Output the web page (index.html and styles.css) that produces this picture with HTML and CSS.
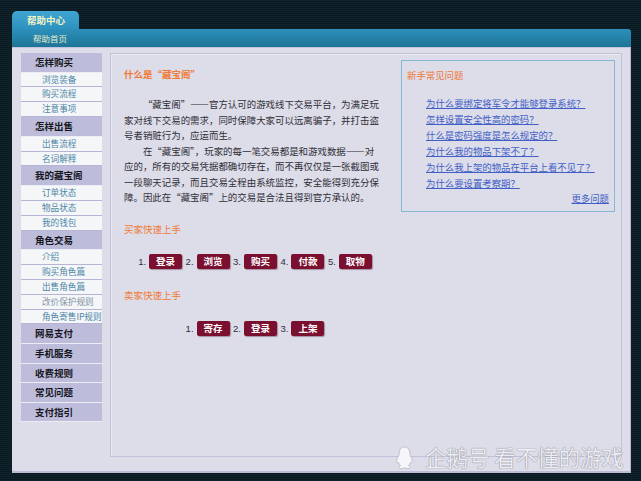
FILE: index.html
```html
<!DOCTYPE html>
<html lang="zh-CN">
<head>
<meta charset="utf-8">
<title>帮助中心</title>
<link rel="stylesheet" href="styles.css">
</head>
<body>
<div class="page">
  <div class="tab">帮助中心</div>
  <div class="bar">帮助首页</div>
  <div class="panel">
    <nav class="side">
      <div class="grp">怎样购买</div>
      <a class="item">浏览装备</a>
      <a class="item">购买流程</a>
      <a class="item">注意事项</a>
      <div class="grp">怎样出售</div>
      <a class="item">出售流程</a>
      <a class="item">名词解释</a>
      <div class="grp">我的藏宝阁</div>
      <a class="item">订单状态</a>
      <a class="item">物品状态</a>
      <a class="item">我的钱包</a>
      <div class="grp">角色交易</div>
      <a class="item">介绍</a>
      <a class="item">购买角色篇</a>
      <a class="item">出售角色篇</a>
      <a class="item dim">改价保护规则</a>
      <a class="item">角色寄售IP规则</a>
      <div class="grp">网易支付</div>
      <div class="grp">手机服务</div>
      <div class="grp">收费规则</div>
      <div class="grp">常见问题</div>
      <div class="grp">支付指引</div>
    </nav>
    <main class="content">
      <section class="intro">
        <h2 class="title bold">什么是“藏宝阁”</h2>
        <p class="para">“藏宝阁”——官方认可的游戏线下交易平台，为满足玩<br>家对线下交易的需求，同时保障大家可以远离骗子，并打击盗<br>号者销赃行为，应运而生。</p>
        <p class="para">在“藏宝阁”，玩家的每一笔交易都是和游戏数据——对<br>应的，所有的交易凭据都确切存在，而不再仅仅是一张截图或<br>一段聊天记录，而且交易全程由系统监控，安全能得到充分保<br>障。因此在“藏宝阁”上的交易是合法且得到官方承认的。</p>
        <h3 class="title sub">买家快速上手</h3>
        <div class="steps">
          <span class="step"><span class="num">1.</span><span class="btn">登录</span></span>
          <span class="step"><span class="num">2.</span><span class="btn">浏览</span></span>
          <span class="step"><span class="num">3.</span><span class="btn">购买</span></span>
          <span class="step"><span class="num">4.</span><span class="btn">付款</span></span>
          <span class="step"><span class="num">5.</span><span class="btn">取物</span></span>
        </div>
        <h3 class="title sub sub2">卖家快速上手</h3>
        <div class="steps steps2">
          <span class="step"><span class="num">1.</span><span class="btn">寄存</span></span>
          <span class="step"><span class="num">2.</span><span class="btn">登录</span></span>
          <span class="step"><span class="num">3.</span><span class="btn">上架</span></span>
        </div>
      </section>
      <aside class="faq">
        <h3 class="faq-title">新手常见问题</h3>
        <ul class="faq-list">
          <li><a>为什么要绑定将军令才能够登录系统？</a></li>
          <li><a>怎样设置安全性高的密码？</a></li>
          <li><a>什么是密码强度是怎么规定的？</a></li>
          <li><a>为什么我的物品下架不了？</a></li>
          <li><a>为什么我上架的物品在平台上看不见了？</a></li>
          <li><a>为什么要设置考察期？</a></li>
        </ul>
        <div class="more"><a>更多问题</a></div>
      </aside>
    </main>
  </div>
  <div class="watermark">
    <svg class="penguin" width="17" height="23" viewBox="0 0 17 23"><path d="M8.5 1C4.8 1 3.2 4 3.2 7.5c0 1.5-.6 2.6-1.5 4C.8 13 .4 15 1 16.5c.4.9 1.2.5 1.6-.2.3 1.4 1 2.6 2 3.4-1 .4-2 1-2 1.8 0 .9 2 1.2 3.2 1 1-.2 1.8-.6 2.7-.6s1.7.4 2.7.6c1.2.2 3.2-.1 3.2-1 0-.8-1-1.4-2-1.8 1-.8 1.7-2 2-3.4.4.7 1.2 1.1 1.6.2.6-1.5.2-3.5-.7-5-.9-1.4-1.5-2.5-1.5-4C13.8 4 12.2 1 8.5 1z" fill="#f6f6fa" stroke="#a6a6b0" stroke-width=".6"/></svg>
    <span class="wm-text">企鹅号 看不懂的游戏</span>
  </div>
</div>
</body>
</html>
```
FILE: styles.css
```css
* { box-sizing: border-box; }
html, body { margin: 0; padding: 0; }
body {
  width: 641px;
  height: 481px;
  overflow: hidden;
  background: repeating-linear-gradient(to bottom, #10222b 0, #10222b 1px, #0b1a21 1px, #0b1a21 2px);
  font-family: "Noto Sans CJK SC", "Noto Sans", sans-serif;
}
.page {
  position: relative;
  width: 641px;
  height: 481px;
  padding: 11px 10px 0 12px;
}
.tab {
  width: 67px;
  height: 18px;
  border-radius: 5px 5px 0 0;
  background: linear-gradient(#40a5d0, #2d92be);
  color: #f4f4c6;
  font-weight: bold;
  font-size: 9.5px;
  line-height: 18px;
  padding-left: 15px;
}
.bar {
  height: 18px;
  border-radius: 0 3px 0 0;
  background: linear-gradient(#2c90bc, #1e7496);
  color: #e6edcc;
  font-size: 8.5px;
  line-height: 18px;
  padding-left: 21px;
}
.panel {
  height: 426px;
  background: #dddce9;
  border-top: 1px solid #c3c6de;
  box-shadow: inset -1px 0 #b7b6d2, inset 0 -2px #bcbbd5;
  display: flex;
  align-items: flex-start;
  gap: 8px;
  padding: 5px 9px 0 9px;
}
.side {
  width: 81px;
  flex: none;
  display: flex;
  flex-direction: column;
}
.grp {
  height: 19.6px;
  line-height: 18.6px;
  background: #bdbddb;
  border-bottom: 1px solid #ececf5;
  color: #151520;
  font-weight: bold;
  font-size: 9.5px;
  padding-left: 14px;
}
.item {
  height: 14.85px;
  line-height: 13.85px;
  background: #f5f6f8;
  border-bottom: 1px solid #b6b5d5;
  color: #4c86a6;
  font-size: 8.6px;
  padding-left: 21px;
}
.item.dim { color: #7f93a4; }
.content {
  flex: 1;
  height: 404px;
  border: 1px solid #c2c1da;
  box-shadow: inset 1px 1px 0 #e9e9f2;
  background: #dddce9;
  display: flex;
  align-items: flex-start;
  padding: 1px 6px 0 13px;
}
.intro {
  width: 262px;
  flex: none;
  padding-top: 11px;
  font-size: 9.45px;
}
.title {
  margin: 0;
  font-size: 9.5px;
  line-height: 16px;
  color: #f07a36;
  font-weight: normal;
}
.title.bold { font-weight: bold; }
.para {
  margin: 0;
  text-indent: 2em;
  color: #2f2f36;
  line-height: 15.5px;
  white-space: nowrap;
}
.title.bold + .para { margin-top: 15px; }
.title.sub { margin-top: 15.25px; }
.title.sub2 { margin-top: 18px; }
.steps {
  display: flex;
  justify-content: center;
  align-items: center;
  gap: 3.5px;
  height: 15px;
  margin-top: 17px;
}
.steps2 { margin-top: 18px; }
.step {
  display: inline-flex;
  align-items: center;
  gap: 3px;
}
.num {
  font-family: "Liberation Sans", Arial, sans-serif;
  font-size: 9.5px;
  color: #2f2f36;
}
.btn {
  display: inline-block;
  width: 33px;
  height: 15px;
  line-height: 15px;
  border-radius: 2px;
  background: #7a0f2f;
  box-shadow: 1px 1px 1px rgba(60, 10, 30, 0.35);
  color: #fff;
  font-weight: bold;
  font-size: 9.5px;
  text-align: center;
}
.faq {
  width: 214px;
  height: 152px;
  margin-left: auto;
  margin-top: 5px;
  border: 1px solid #86b8d6;
  padding: 6px 5px 0 5px;
}
.faq-title {
  margin: 0;
  font-size: 9.4px;
  line-height: 16px;
  font-weight: normal;
  color: #f07a36;
}
.faq-list {
  list-style: none;
  margin: 13px 0 0 0;
  padding: 0 0 0 19px;
  font-size: 9.4px;
  line-height: 15.9px;
}
.faq-list a, .more a {
  color: #3f5fc6;
  text-decoration: underline;
}
.more {
  text-align: right;
  font-size: 9.4px;
  line-height: 15.9px;
}
.watermark {
  position: absolute;
  left: 396px;
  top: 444px;
  display: flex;
  align-items: center;
  gap: 12px;
}
.wm-text {
  font-size: 21.5px;
  line-height: 26px;
  color: #ececf2;
  text-shadow: 0 0 1px #8a8a96, 0 0 1px #8a8a96;
  letter-spacing: 0;
  white-space: nowrap;
}
```
